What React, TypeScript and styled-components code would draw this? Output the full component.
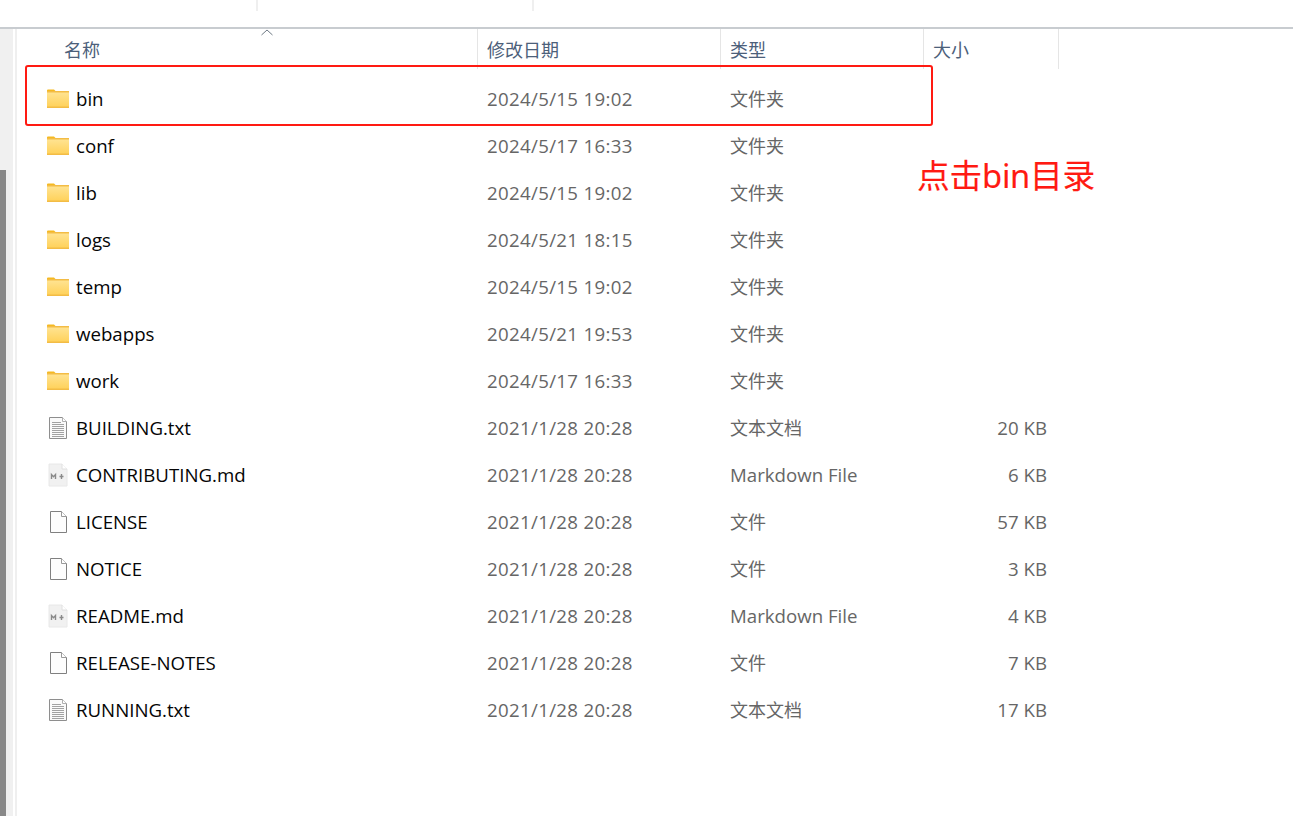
import React from "react";
import styled, { createGlobalStyle } from "styled-components";

const Global = createGlobalStyle`
  html, body { margin: 0; padding: 0; background: #fff; }
  body { font-family: "Open Sans", "Noto Sans CJK SC", "Noto Sans", sans-serif; }
`;

const Page = styled.div`
  width: 1293px;
  height: 816px;
  overflow: hidden;
  background: #fff;
  display: flex;
  flex-direction: column;
`;

const TopStrip = styled.div`
  height: 27px;
  flex: none;
  box-sizing: border-box;
  display: flex;
`;

const TopTab = styled.div<{ $w: number }>`
  width: ${(p) => p.$w}px;
  height: 11px;
  flex: none;
  box-sizing: border-box;
  border-right: 2px solid #efefef;
`;

const TopRule = styled.div`
  height: 2px;
  flex: none;
  background: #c8ccd0;
`;

const Body = styled.div`
  flex: 1;
  display: flex;
  min-height: 0;
`;

const Rail = styled.div`
  width: 13px;
  flex: none;
  background: #f0f0f0;
  padding-top: 141px;
  box-sizing: border-box;
`;

const Thumb = styled.div`
  width: 6px;
  height: 100%;
  background: #888888;
`;

const RailEdge = styled.div`
  width: 2px;
  margin-left: 2px;
  flex: none;
  background: #efefef;
`;

const Content = styled.div`
  position: relative;
  flex: 1;
  min-width: 0;
`;

const Columns = "461px 243px 203px 135px";

const HeaderRow = styled.div`
  display: grid;
  grid-template-columns: ${Columns};
  height: 40px;
  width: max-content;
`;

const HeaderCell = styled.div<{ $first?: boolean }>`
  box-sizing: border-box;
  display: flex;
  align-items: center;
  padding-left: ${(p) => (p.$first ? "47px" : "9px")};
  border-right: 1px solid #e5e5e5;
  font-size: 18px;
  color: #4c607a;
  font-family: "Noto Sans CJK SC", sans-serif;
  line-height: 39px;
`;

const SortMark = styled.svg`
  position: absolute;
  left: 244px;
  top: 0;
`;

const Rows = styled.div`
  padding-top: 6px;
`;

const Row = styled.div`
  display: grid;
  grid-template-columns: ${Columns};
  height: 47px;
  align-items: center;
  font-size: 18.67px;
  width: max-content;
`;

const NameCell = styled.div`
  display: flex;
  align-items: center;
  height: 100%;
  padding-left: 29px;
  color: #050505;
  gap: 6px;
`;

const IconBox = styled.div`
  width: 24px;
  height: 24px;
  flex: none;
`;

const MutedCell = styled.div`
  padding-left: 9px;
  color: #666666;
  white-space: nowrap;
  letter-spacing: 0.33px;
`;

const TypeCell = styled.div<{ $latin: boolean }>`
  padding-left: 9px;
  padding-bottom: ${(p) => (p.$latin ? "0" : "2px")};
  color: #666666;
  white-space: nowrap;
  font-size: ${(p) => (p.$latin ? "18.67px" : "18px")};
`;

const SizeCell = styled.div`
  text-align: right;
  color: #666666;
  padding-right: 12px;
`;

const Highlight = styled.div`
  position: absolute;
  left: 8px;
  top: 36px;
  width: 908px;
  height: 61px;
  box-sizing: border-box;
  border: 2px solid #ff1a12;
  border-radius: 3px;
  pointer-events: none;
`;

const Note = styled.div`
  position: absolute;
  left: 900px;
  top: 122px;
  font-size: 32.7px;
  line-height: 50px;
  color: #ff1a12;
  font-family: "Noto Sans", "Noto Sans CJK SC", sans-serif;
  white-space: nowrap;
  letter-spacing: -0.2px;
  -webkit-text-stroke: 0.15px #ff1a12;
`;

const Folder = () => (
  <svg width="24" height="24" viewBox="0 0 24 24">
    <path d="M1 3.5a1 1 0 0 1 1-1h6l2 2h-9z" fill="#f5b921" />
    <rect x="1" y="4" width="22" height="17" fill="#f3bc45" />
    <defs>
      <linearGradient id="fg" x1="0" y1="0" x2="0" y2="1">
        <stop offset="0" stopColor="#ffe391" />
        <stop offset="1" stopColor="#ffd25c" />
      </linearGradient>
    </defs>
    <rect x="1" y="5.5" width="22" height="14" fill="url(#fg)" />
  </svg>
);

const TextDoc = () => (
  <svg width="24" height="24" viewBox="0 0 24 24">
    <path d="M3.5 1.5h13l4 4v17h-17z" fill="#fafafa" stroke="#8e8e8e" />
    <path d="M16.5 1.5v4h4" fill="#fff" stroke="#b0b0b0" />
    <path d="M6 6.5h9M6 8.5h12M6 10.5h12M6 12.5h12M6 14.5h12M6 16.5h12M6 18.5h12M6 20.5h12" stroke="#a2a2a2" />
  </svg>
);

const BlankDoc = () => (
  <svg width="24" height="24" viewBox="0 0 24 24">
    <path d="M4.5 1.5h11l5 5v16h-16z" fill="#fdfdfd" stroke="#808080" />
    <path d="M15.5 1.5v5h5" fill="#fff" stroke="#9a9a9a" />
  </svg>
);

const MdDoc = () => (
  <svg width="24" height="24" viewBox="0 0 24 24">
    <path d="M3 1h13l5 5v17H3z" fill="#f1f1f1" stroke="#e8e8e8" />
    <path d="M16 1v5h5" fill="#fff" stroke="#e0e0e0" />
    <path d="M5.5 16v-4.5l2 2.2 2-2.2V16M15.5 11v5M13.5 13.5h4" fill="none" stroke="#8a8a8a" strokeWidth="1.4" />
  </svg>
);

type Kind = "folder" | "text" | "blank" | "md";

const icons: Record<Kind, React.FC> = { folder: Folder, text: TextDoc, blank: BlankDoc, md: MdDoc };

const files: { name: string; date: string; type: string; size: string; kind: Kind }[] = [
  { name: "bin", date: "2024/5/15 19:02", type: "文件夹", size: "", kind: "folder" },
  { name: "conf", date: "2024/5/17 16:33", type: "文件夹", size: "", kind: "folder" },
  { name: "lib", date: "2024/5/15 19:02", type: "文件夹", size: "", kind: "folder" },
  { name: "logs", date: "2024/5/21 18:15", type: "文件夹", size: "", kind: "folder" },
  { name: "temp", date: "2024/5/15 19:02", type: "文件夹", size: "", kind: "folder" },
  { name: "webapps", date: "2024/5/21 19:53", type: "文件夹", size: "", kind: "folder" },
  { name: "work", date: "2024/5/17 16:33", type: "文件夹", size: "", kind: "folder" },
  { name: "BUILDING.txt", date: "2021/1/28 20:28", type: "文本文档", size: "20 KB", kind: "text" },
  { name: "CONTRIBUTING.md", date: "2021/1/28 20:28", type: "Markdown File", size: "6 KB", kind: "md" },
  { name: "LICENSE", date: "2021/1/28 20:28", type: "文件", size: "57 KB", kind: "blank" },
  { name: "NOTICE", date: "2021/1/28 20:28", type: "文件", size: "3 KB", kind: "blank" },
  { name: "README.md", date: "2021/1/28 20:28", type: "Markdown File", size: "4 KB", kind: "md" },
  { name: "RELEASE-NOTES", date: "2021/1/28 20:28", type: "文件", size: "7 KB", kind: "blank" },
  { name: "RUNNING.txt", date: "2021/1/28 20:28", type: "文本文档", size: "17 KB", kind: "text" },
];

export default function App() {
  return (
    <Page>
      <Global />
      <TopStrip>
        <TopTab $w={258} />
        <TopTab $w={276} />
      </TopStrip>
      <TopRule />
      <Body>
        <Rail>
          <Thumb />
        </Rail>
        <RailEdge />
        <Content>
          <HeaderRow>
            <HeaderCell $first>名称</HeaderCell>
            <HeaderCell>修改日期</HeaderCell>
            <HeaderCell>类型</HeaderCell>
            <HeaderCell>大小</HeaderCell>
          </HeaderRow>
          <SortMark width="12" height="7" viewBox="0 0 12 7">
            <path d="M0.5 6L6 1l5.5 5" fill="none" stroke="#6f7a85" />
          </SortMark>
          <Rows>
            {files.map((f) => {
              const Icon = icons[f.kind];
              return (
                <Row key={f.name}>
                  <NameCell>
                    <IconBox>
                      <Icon />
                    </IconBox>
                    {f.name}
                  </NameCell>
                  <MutedCell>{f.date}</MutedCell>
                  <TypeCell $latin={/^[A-Za-z]/.test(f.type)}>{f.type}</TypeCell>
                  <SizeCell>{f.size}</SizeCell>
                </Row>
              );
            })}
          </Rows>
          <Highlight />
          <Note>点击bin目录</Note>
        </Content>
      </Body>
    </Page>
  );
}
